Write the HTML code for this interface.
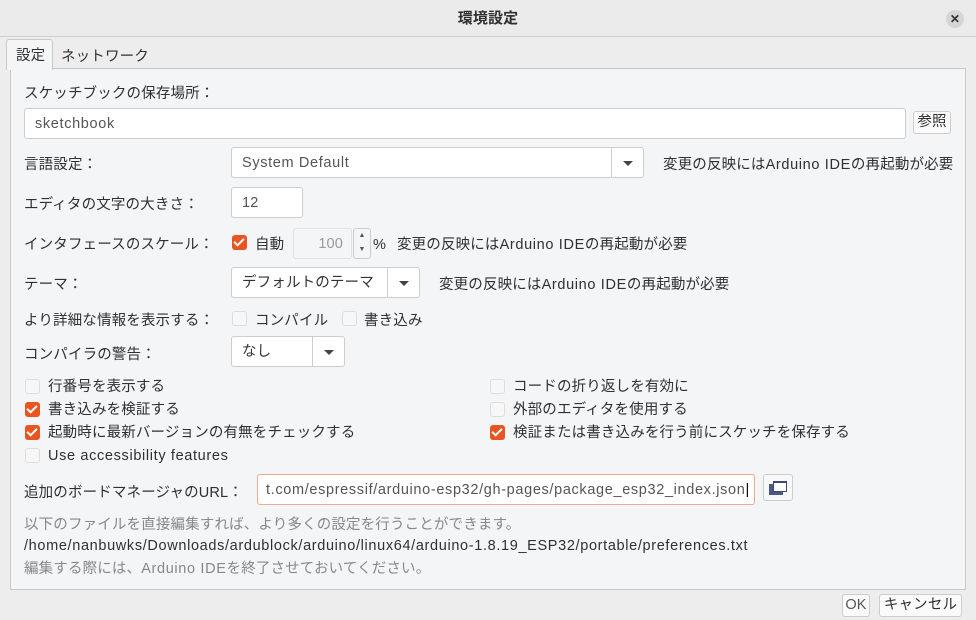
<!DOCTYPE html>
<html><head><meta charset="utf-8"><style>
*{box-sizing:border-box;margin:0;padding:0}
body{width:976px;height:620px;overflow:hidden;background:#ededed;font-family:"Liberation Sans","Noto Sans CJK JP",sans-serif;font-size:14.5px;color:#303030;position:relative;letter-spacing:0.15px}
.a{position:absolute;white-space:nowrap;line-height:26px}
.L{letter-spacing:0.65px}
.title{left:0;top:0;width:976px;height:37px;background:#ebebeb;border-bottom:1px solid #cfcfcf;text-align:center;line-height:37px;font-weight:bold;font-size:15px}
.close{left:946px;top:10px;width:18px;height:18px;border-radius:50%;background:#d6d6d6;text-align:center;line-height:18px;font-size:12px;font-weight:bold}
.panel{left:10px;top:68px;width:956px;height:522px;background:#f4f5f7;border:1px solid #c8c8c8}
.tab{left:6px;top:39px;width:47px;height:31px;background:#f4f5f7;border:1px solid #c8c8c8;border-bottom:none;border-radius:3px 3px 0 0;line-height:33px;padding-left:9px}
.in{background:#fff;border:1px solid #cdcdcd;border-radius:3px;height:31px;line-height:30px;padding-left:10px;color:#555}
.dd{position:absolute;right:0;top:0;width:32px;height:29px;border-left:1px solid #cdcdcd}
.dd:after{content:"";position:absolute;left:11px;top:13px;border-left:5px solid transparent;border-right:5px solid transparent;border-top:5px solid #444}
.cb{width:15px;height:15px;border:1px solid #ddd;border-radius:3px;background:#f7f7f7}
.ck{width:15px;height:15px;border-radius:3px;background:#e95420}
.ck:after{content:"";position:absolute;left:4px;top:1px;width:4px;height:8px;border:solid #fff;border-width:0 2px 2px 0;transform:rotate(45deg)}
.btn{background:#fafafa;border:1px solid #cdcdcd;border-radius:3px;height:23px;line-height:21px;text-align:center}
.g{color:#888}
</style></head><body>
<div class="a title">環境設定</div>
<div class="a close">✕</div>
<div class="a panel"></div>
<div class="a tab">設定</div>
<div class="a" style="left:61px;top:44px;line-height:26px">ネットワーク</div>

<div class="a" style="left:24px;top:81px">スケッチブックの保存場所：</div>
<div class="a in L" style="left:24px;top:108px;width:882px">sketchbook</div>
<div class="a btn" style="left:913px;top:111px;width:38px">参照</div>

<div class="a" style="left:24px;top:152px">言語設定：</div>
<div class="a in L" style="left:231px;top:147px;width:413px">System Default<div class="dd"></div></div>
<div class="a" style="left:663px;top:152px">変更の反映には<span class="L">Arduino IDE</span>の再起動が必要</div>

<div class="a" style="left:24px;top:192px">エディタの文字の大きさ：</div>
<div class="a in" style="left:231px;top:187px;width:72px">12</div>

<div class="a" style="left:24px;top:232px">インタフェースのスケール：</div>
<div class="a ck" style="left:232px;top:235px"></div>
<div class="a" style="left:255px;top:232px">自動</div>
<div class="a in" style="left:293px;top:228px;width:59px;background:#f4f5f7;border-color:#e2e2e2;color:#999;text-align:right;padding-right:8px">100</div>
<div class="a" style="left:353px;top:228px;width:18px;height:31px;border:1px solid #cdcdcd;border-radius:3px;font-size:7px;text-align:center;line-height:14px;color:#555">▲<br>▼</div>
<div class="a" style="left:373px;top:232px">%</div>
<div class="a" style="left:397px;top:232px">変更の反映には<span class="L">Arduino IDE</span>の再起動が必要</div>

<div class="a" style="left:24px;top:272px">テーマ：</div>
<div class="a in" style="left:231px;top:267px;width:189px;color:#333">デフォルトのテーマ<div class="dd"></div></div>
<div class="a" style="left:439px;top:272px">変更の反映には<span class="L">Arduino IDE</span>の再起動が必要</div>

<div class="a" style="left:24px;top:308px">より詳細な情報を表示する：</div>
<div class="a cb" style="left:232px;top:311px"></div>
<div class="a" style="left:255px;top:308px">コンパイル</div>
<div class="a cb" style="left:342px;top:311px"></div>
<div class="a" style="left:364px;top:308px">書き込み</div>

<div class="a" style="left:24px;top:342px">コンパイラの警告：</div>
<div class="a in" style="left:231px;top:336px;width:114px;color:#333">なし<div class="dd"></div></div>

<div class="a cb" style="left:25px;top:379px"></div><div class="a" style="left:48px;top:374px">行番号を表示する</div>
<div class="a ck" style="left:25px;top:402px"></div><div class="a" style="left:48px;top:397px">書き込みを検証する</div>
<div class="a ck" style="left:25px;top:425px"></div><div class="a" style="left:48px;top:420px">起動時に最新バージョンの有無をチェックする</div>
<div class="a cb" style="left:25px;top:448px"></div><div class="a L" style="left:48px;top:443px">Use accessibility features</div>
<div class="a cb" style="left:490px;top:379px"></div><div class="a" style="left:513px;top:374px">コードの折り返しを有効に</div>
<div class="a cb" style="left:490px;top:402px"></div><div class="a" style="left:513px;top:397px">外部のエディタを使用する</div>
<div class="a ck" style="left:490px;top:425px"></div><div class="a" style="left:513px;top:420px">検証または書き込みを行う前にスケッチを保存する</div>

<div class="a" style="left:24px;top:480px">追加のボードマネージャのURL：</div>
<div class="a in L" style="left:257px;top:474px;width:498px;border-color:#f0a890;color:#555;overflow:hidden;padding-left:8px">t.com/espressif/arduino-esp32/gh-pages/package_esp32_index.json<span style="color:#000">|</span></div>
<div class="a btn" style="left:763px;top:474px;width:30px;height:27px;background:#f8f8f8"><svg width="20" height="16" viewBox="0 0 20 16" style="margin-top:5px"><rect x="1" y="4" width="14" height="11" fill="#4a5a85"/><rect x="5.5" y="1.5" width="13" height="10" fill="#fff" stroke="#3a4a75"/><rect x="5" y="1" width="14" height="2" fill="#3a4a75"/></svg></div>

<div class="a g" style="left:24px;top:512px">以下のファイルを直接編集すれば、より多くの設定を行うことができます。</div>
<div class="a L" style="left:24px;top:533px">/home/nanbuwks/Downloads/ardublock/arduino/linux64/arduino-1.8.19_ESP32/portable/preferences.txt</div>
<div class="a g" style="left:24px;top:556px">編集する際には、<span class="L">Arduino IDE</span>を終了させておいてください。</div>

<div class="a btn" style="left:842px;top:594px;width:28px;color:#555;line-height:21px">OK</div>
<div class="a btn" style="left:879px;top:594px;width:83px;line-height:21px">キャンセル</div>
</body></html>
